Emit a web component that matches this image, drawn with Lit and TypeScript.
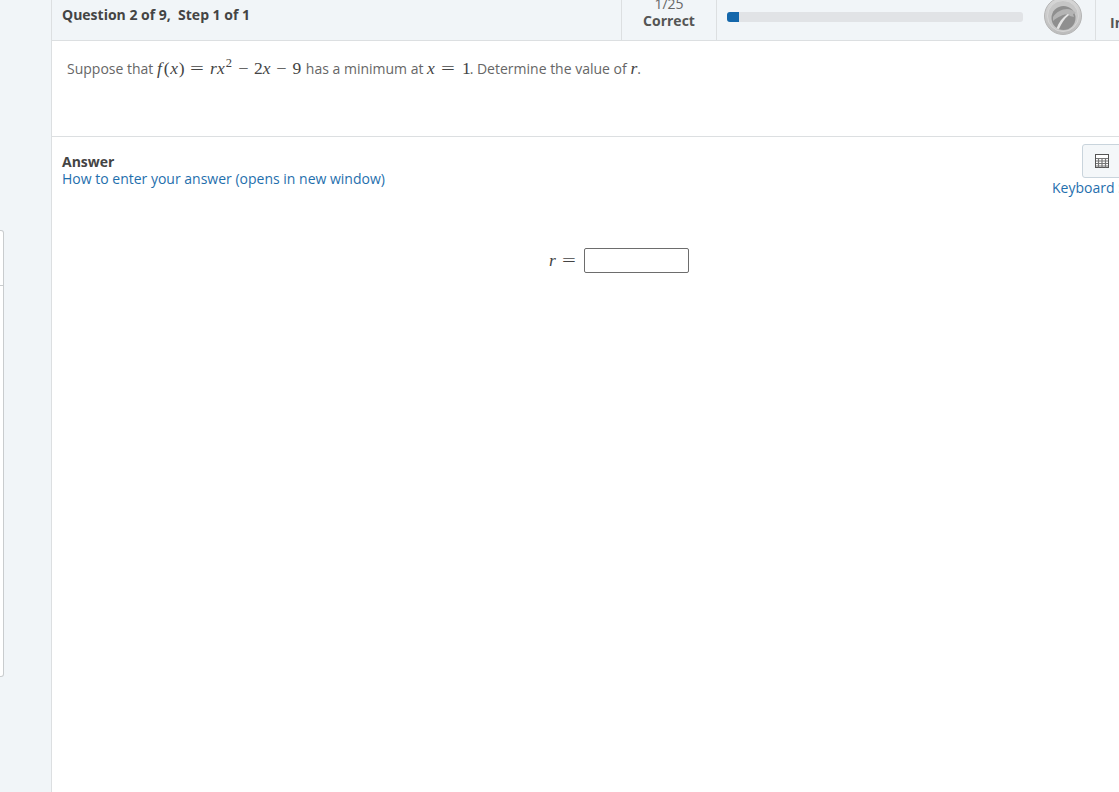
import { LitElement, html, css } from "lit";
import { customElement } from "lit/decorators.js";

@customElement("app-root")
export class AppRoot extends LitElement {
  static styles = css`
    :host { display: block; width: 1119px; height: 792px; overflow: hidden; font-family: "Open Sans", sans-serif; color: #555; background: #fff; }
    * { box-sizing: border-box; }
    .page { display: flex; width: 1119px; height: 792px; }
    .side { flex: 0 0 52px; background: #f1f5f8; border-right: 1px solid #dcdfe1; padding-top: 230px; }
    .panel { width: 4px; height: 447px; background: #fff; border: 1px solid #c9ccce; border-left: 0; border-radius: 0 3px 3px 0; padding-top: 54px; }
    .panel div { height: 1px; background: #c9ccce; }
    .main { flex: 0 0 1200px; display: flex; flex-direction: column; }
    .head { height: 41px; display: flex; background: #f1f5f8; border-bottom: 1px solid #dcdfe1; overflow: hidden; }
    .title { flex: 0 0 569px; padding: 5px 0 0 10px; font-size: 14px; font-weight: 700; line-height: 20px; color: #444; white-space: pre; }
    .count { flex: 0 0 96px; border-left: 1px solid #dcdfe1; border-right: 1px solid #dcdfe1; text-align: center; font-size: 14px; line-height: 18px; margin-top: -7px; padding-top: 2px; height: 47px; }
    .count b { display: block; font-weight: 700; color: #555; margin-top: -1px; }
    .count span { display: block; color: #666; }
    .prog { flex: 0 0 378px; display: flex; padding: 12px 0 0 10px; gap: 21px; }
    .track { width: 296px; height: 10px; border-radius: 3px; background: #e1e3e6; }
    .fill { width: 12px; height: 10px; background: #1467ab; border-radius: 3px 0 0 3px; }
    .medal { display: block; width: 38px; height: 38px; margin-top: -15px; }
    .info { border-left: 1px solid #dcdfe1; padding: 14px 0 0 14px; font-size: 14px; font-weight: 700; color: #555; line-height: 18px; }
    .question { height: 96px; border-bottom: 1px solid #dcdfe1; padding: 17px 0 0 15px; font-size: 14px; line-height: 20px; color: #666; white-space: nowrap; }
    .m { font-family: "Liberation Serif", serif; font-size: 17.5px; color: #444; }
    .m i { font-style: italic; }
    .f { margin: 0 2px 0 0; }
    .paren { letter-spacing: 0.6px; }
    .m sup { font-size: 12.5px; line-height: 0; vertical-align: 7px; margin-left: 1px; }
    .op { display: inline-block; width: 14px; margin: 0 6px 0 5px; text-align: center; line-height: 1; transform: scaleX(1.4); }
    .op.minus { width: 11px; margin: 0 5px 0 6px; transform: scaleX(1.05); }
    .nine { margin-right: 1px; }
    .xv { margin-right: 1px; }
    .one { margin-left: 1px; margin-right: -1px; }
    .answer { display: flex; height: 111px; padding: 16px 0 0 10px; }
    .left { flex: 0 0 990px; line-height: 17px; font-size: 14px; }
    .left strong { display: block; font-weight: 700; color: #444; }
    a { color: #1f6fad; text-decoration: none; }
    .tools { flex: none; margin-top: -9px; }
    .calc { width: 60px; height: 34px; margin-left: 30px; border: 1px solid #c9d4dc; border-radius: 3px; background: #f4f7f9; padding: 9px 0 0 12px; }
    .calc svg { display: block; }
    .kb { display: block; font-size: 14px; line-height: 19px; white-space: nowrap; }
    .entry { display: flex; align-items: center; height: 25px; padding-left: 497px; }
    .entry .op { margin: 0 8px 0 6px; }
    .box { width: 105px; height: 25px; border: 1px solid #6d6d6d; border-radius: 2px; background: #fff; }
  `;

  render() {
    return html`
      <div class="page">
        <aside class="side"><div class="panel"><div></div></div></aside>
        <main class="main">
          <header class="head">
            <div class="title">Question 2 of 9,  Step 1 of 1</div>
            <div class="count"><span>1/25</span><b>Correct</b></div>
            <div class="prog">
              <div class="track"><div class="fill"></div></div>
              <svg class="medal" viewBox="0 0 38 38" aria-hidden="true">
                <defs>
                  <linearGradient id="g" x1="0" y1="0" x2="0" y2="1">
                    <stop offset="0" stop-color="#d8d8d8" /><stop offset="1" stop-color="#bcbcbc" />
                  </linearGradient>
                </defs>
                <circle cx="19" cy="19" r="18.5" fill="url(#g)" stroke="#b4b4b4" />
                <circle cx="19" cy="19" r="15.5" fill="#c6c6c6" stroke="#d6d6d6" />
                <circle cx="19.5" cy="21" r="12" fill="#8f8f8f" />
                <path d="M9 20c3-5 9-8 14-8 3 0 6 1 9 4l-3 1 1 3-4-1c-2-2-6-2-9 0-3 1-6 3-8 5z" fill="#b4b4b4" />
                <path d="M12.5 31.5c2-6 6-11 11-14.500 1 0 2 1 1 1.500-4 3-7 8-9.500 13.500z" fill="#e4e4e4" />
              </svg>
            </div>
            <div class="info">Instructions</div>
          </header>
          <section class="question">Suppose that <span class="m"><i class="f">f</i><span class="paren">(<i>x</i>)</span><span class="op">=</span><i>rx</i><sup>2</sup><span class="op minus">−</span>2<i>x</i><span class="op minus">−</span><span class="nine">9</span></span> has a minimum at <span class="m"><i class="xv">x</i><span class="op">=</span><span class="one">1</span></span>. Determine the value of <span class="m"><i>r</i></span>.</section>
          <section class="answer">
            <div class="left">
              <strong>Answer</strong>
              <a href="#">How to enter your answer (opens in new window)</a>
            </div>
            <div class="tools">
              <div class="calc">
                <svg width="14" height="14" viewBox="0 0 14 14" aria-hidden="true">
                  <rect x="0.5" y="0.5" width="13" height="13" fill="#fff" stroke="#555" />
                  <path d="M1 4.5h12M1 7h12M1 9.5h12M1 12h12" stroke="#777" />
                  <path d="M3.5 4.500v9M7 4.500v9M10.5 4.500v9" stroke="#777" stroke-width="1.2" />
                </svg>
              </div>
              <a class="kb" href="#">Keyboard Shortcuts</a>
            </div>
          </section>
          <div class="entry"><span class="m"><i>r</i><span class="op">=</span></span><div class="box"></div></div>
        </main>
      </div>
    `;
  }
}
